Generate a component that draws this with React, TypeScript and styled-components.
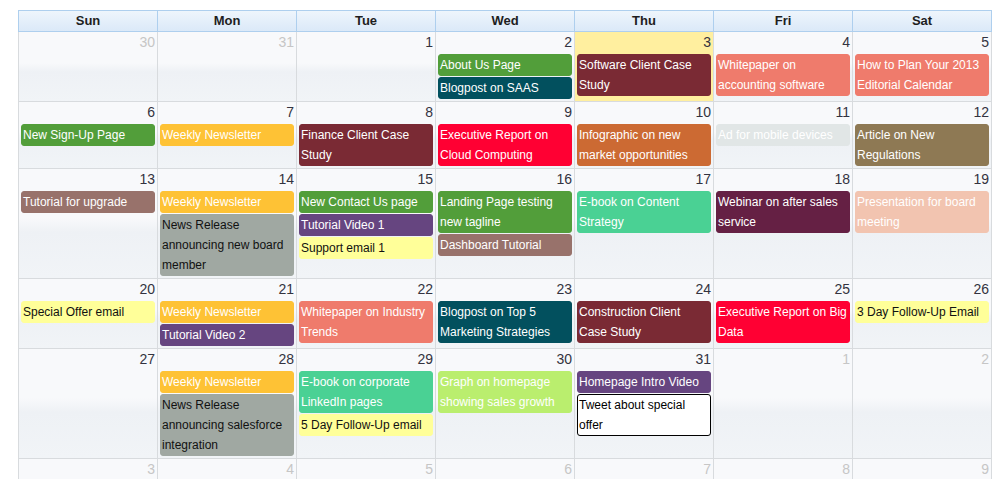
import React from "react";
import styled, { createGlobalStyle } from "styled-components";

const GlobalStyle = createGlobalStyle`
  html, body {
    margin: 0;
    padding: 0;
    background: #ffffff;
    overflow: hidden;
  }
  body {
    font-family: "Liberation Sans", Arial, sans-serif;
  }
`;

type Ev = { title: string; bg: string; fg?: string; bd?: string };
type Day = { n: number; other?: boolean; today?: boolean; events?: Ev[] };

const C = {
  green: "#529e3a",
  teal: "#02505e",
  maroon: "#7a2a34",
  salmon: "#ef7b6c",
  orange: "#fec235",
  red: "#ff0033",
  rust: "#cc6a33",
  light: "#e1e6e6",
  brown: "#8e7954",
  mauve: "#98726b",
  gray: "#a0a8a2",
  purple: "#664580",
  yellow: "#ffff99",
  mint: "#4ad194",
  wine: "#652044",
  peach: "#f2c4b0",
  lime: "#baee6e",
};

const dark = "#111111";

const weeks: Day[][] = [
  [
    { n: 30, other: true },
    { n: 31, other: true },
    { n: 1 },
    {
      n: 2,
      events: [
        { title: "About Us Page", bg: C.green },
        { title: "Blogpost on SAAS", bg: C.teal },
      ],
    },
    { n: 3, today: true, events: [{ title: "Software Client Case Study", bg: C.maroon }] },
    { n: 4, events: [{ title: "Whitepaper on accounting software", bg: C.salmon }] },
    { n: 5, events: [{ title: "How to Plan Your 2013 Editorial Calendar", bg: C.salmon }] },
  ],
  [
    { n: 6, events: [{ title: "New Sign-Up Page", bg: C.green }] },
    { n: 7, events: [{ title: "Weekly Newsletter", bg: C.orange }] },
    { n: 8, events: [{ title: "Finance Client Case Study", bg: C.maroon }] },
    { n: 9, events: [{ title: "Executive Report on Cloud Computing", bg: C.red }] },
    { n: 10, events: [{ title: "Infographic on new market opportunities", bg: C.rust }] },
    { n: 11, events: [{ title: "Ad for mobile devices", bg: C.light }] },
    { n: 12, events: [{ title: "Article on New Regulations", bg: C.brown }] },
  ],
  [
    { n: 13, events: [{ title: "Tutorial for upgrade", bg: C.mauve }] },
    {
      n: 14,
      events: [
        { title: "Weekly Newsletter", bg: C.orange },
        { title: "News Release announcing new board member", bg: C.gray, fg: dark },
      ],
    },
    {
      n: 15,
      events: [
        { title: "New Contact Us page", bg: C.green },
        { title: "Tutorial Video 1", bg: C.purple },
        { title: "Support email 1", bg: C.yellow, fg: dark },
      ],
    },
    {
      n: 16,
      events: [
        { title: "Landing Page testing new tagline", bg: C.green },
        { title: "Dashboard Tutorial", bg: C.mauve },
      ],
    },
    { n: 17, events: [{ title: "E-book on Content Strategy", bg: C.mint }] },
    { n: 18, events: [{ title: "Webinar on after sales service", bg: C.wine }] },
    { n: 19, events: [{ title: "Presentation for board meeting", bg: C.peach }] },
  ],
  [
    { n: 20, events: [{ title: "Special Offer email", bg: C.yellow, fg: dark }] },
    {
      n: 21,
      events: [
        { title: "Weekly Newsletter", bg: C.orange },
        { title: "Tutorial Video 2", bg: C.purple },
      ],
    },
    { n: 22, events: [{ title: "Whitepaper on Industry Trends", bg: C.salmon }] },
    { n: 23, events: [{ title: "Blogpost on Top 5 Marketing Strategies", bg: C.teal }] },
    { n: 24, events: [{ title: "Construction Client Case Study", bg: C.maroon }] },
    { n: 25, events: [{ title: "Executive Report on Big Data", bg: C.red }] },
    { n: 26, events: [{ title: "3 Day Follow-Up Email", bg: C.yellow, fg: dark }] },
  ],
  [
    { n: 27 },
    {
      n: 28,
      events: [
        { title: "Weekly Newsletter", bg: C.orange },
        { title: "News Release announcing salesforce integration", bg: C.gray, fg: dark },
      ],
    },
    {
      n: 29,
      events: [
        { title: "E-book on corporate LinkedIn pages", bg: C.mint },
        { title: "5 Day Follow-Up email", bg: C.yellow, fg: dark },
      ],
    },
    { n: 30, events: [{ title: "Graph on homepage showing sales growth", bg: C.lime }] },
    {
      n: 31,
      events: [
        { title: "Homepage Intro Video", bg: C.purple },
        { title: "Tweet about special offer", bg: "#ffffff", fg: "#000000", bd: "#000000" },
      ],
    },
    { n: 1, other: true },
    { n: 2, other: true },
  ],
  [3, 4, 5, 6, 7, 8, 9].map((n) => ({ n, other: true })),
];

const dayNames = ["Sun", "Mon", "Tue", "Wed", "Thu", "Fri", "Sat"];

const Page = styled.div`
  padding: 10px 0 0 18px;
`;

const Calendar = styled.div`
  width: 974px;
`;

const HeaderRow = styled.div`
  display: grid;
  grid-template-columns: repeat(7, 139px);
  border-top: 1px solid #aecfee;
  border-left: 1px solid #aecfee;
`;

const HeaderCell = styled.div`
  height: 20px;
  line-height: 20px;
  text-align: center;
  font-size: 13px;
  font-weight: bold;
  color: #1e1e1e;
  background: linear-gradient(to bottom, #eef5fc 0%, #dbe9f8 100%);
  border-right: 1px solid #aecfee;
  border-bottom: 1px solid #aecfee;
`;

const Body = styled.div`
  display: grid;
  grid-template-columns: repeat(7, 139px);
  border-left: 1px solid #d8dbde;
`;

const Cell = styled.div<{ $today?: boolean; $last?: boolean }>`
  border-right: 1px solid #d8dbde;
  border-bottom: 1px solid #d8dbde;
  padding-bottom: 1px;
  min-height: ${(p) => (p.$last ? "60px" : "0")};
  background: ${(p) =>
    p.$today
      ? "#ffef9f"
      : "linear-gradient(to bottom, #f8f9fb 0%, #f8f9fb 45%, #eef1f5 58%, #f1f4f7 100%)"};
`;

const DayNum = styled.div<{ $other?: boolean }>`
  height: 20px;
  line-height: 20px;
  margin-bottom: 2px;
  padding: 0 2px;
  text-align: right;
  font-size: 14px;
  color: ${(p) => (p.$other ? "#c6c6c6" : "#333340")};
`;

const Event = styled.div<{ $bg: string; $fg: string; $bd: string }>`
  margin: 0 2px 1px 2px;
  padding: 0 0 0 1px;
  border: 1px solid ${(p) => p.$bd};
  border-radius: 3px;
  background: ${(p) => p.$bg};
  color: ${(p) => p.$fg};
  font-size: 12px;
  line-height: 20px;
`;

export default function App() {
  return (
    <>
      <GlobalStyle />
      <Page>
        <Calendar>
          <HeaderRow>
            {dayNames.map((d) => (
              <HeaderCell key={d}>{d}</HeaderCell>
            ))}
          </HeaderRow>
          <Body>
            {weeks.map((week, wi) =>
              week.map((day, di) => (
                <Cell key={`${wi}-${di}`} $today={day.today} $last={wi === weeks.length - 1}>
                  <DayNum $other={day.other}>{day.n}</DayNum>
                  {(day.events || []).map((ev, ei) => (
                    <Event
                      key={ei}
                      $bg={ev.bg}
                      $fg={ev.fg || "#ffffff"}
                      $bd={ev.bd || ev.bg}
                    >
                      {ev.title}
                    </Event>
                  ))}
                </Cell>
              ))
            )}
          </Body>
        </Calendar>
      </Page>
    </>
  );
}
